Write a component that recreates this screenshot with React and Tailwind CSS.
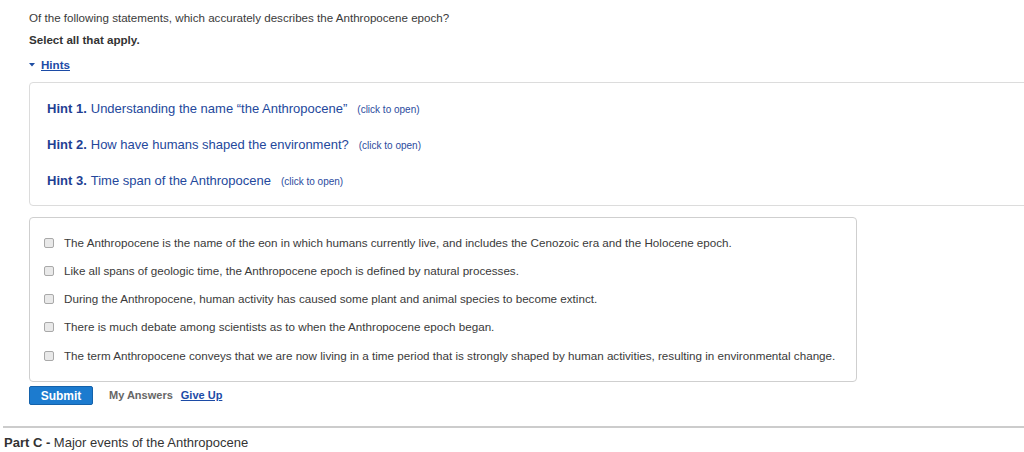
import React from "react";

const hints = [
  "Understanding the name “the Anthropocene”",
  "How have humans shaped the environment?",
  "Time span of the Anthropocene",
];

const answers = [
  "The Anthropocene is the name of the eon in which humans currently live, and includes the Cenozoic era and the Holocene epoch.",
  "Like all spans of geologic time, the Anthropocene epoch is defined by natural processes.",
  "During the Anthropocene, human activity has caused some plant and animal species to become extinct.",
  "There is much debate among scientists as to when the Anthropocene epoch began.",
  "The term Anthropocene conveys that we are now living in a time period that is strongly shaped by human activities, resulting in environmental change.",
];

export default function App() {
  return (
    <div
      className="w-[1024px] h-[452px] overflow-hidden bg-white text-[#333]"
      style={{ fontFamily: '"Liberation Sans", Arial, sans-serif' }}
    >
      <div className="pl-[29px]">
        <div className="pt-[11px] text-[11.6px] leading-[14px] text-[#3a3a3a]">
          Of the following statements, which accurately describes the Anthropocene epoch?
        </div>
        <div className="mt-[8px] text-[11.6px] leading-[14px] font-bold text-[#333]">
          Select all that apply.
        </div>
        <div className="mt-[11px] flex items-center h-[14px] text-[11.6px] leading-[14px]">
          <svg width="7" height="6" viewBox="0 0 7 6" className="mr-[5px]">
            <path d="M0 1 L6 1 L3 4.5 Z" fill="#1f4ea3" />
          </svg>
          <span className="font-bold text-[#1c4ba6] underline">Hints</span>
        </div>
        <div className="mt-[10px] w-[1010px] h-[124px] border border-[#dcdcdc] rounded-l-[4px] pl-[17px] pt-[18px] flex flex-col gap-[20px]">
          {hints.map((h, i) => (
            <div key={i} className="h-[16px] flex items-center whitespace-nowrap text-[#24489c]">
              <span className="text-[13px] font-bold text-[#1f3f93]">Hint {i + 1}.</span>
              <span className="text-[13px] ml-[4px]">{h}</span>
              <span className="text-[10px] ml-[10px] text-[#2b4b9e]">(click to open)</span>
            </div>
          ))}
        </div>
        <div className="mt-[11px] w-[828px] h-[165px] border border-[#cfcfcf] rounded-[4px] pl-[14px] pt-[18px] flex flex-col">
          {answers.map((a, i) => (
            <div
              key={i}
              className={`flex items-center h-[14px] ${i === 4 ? "mt-[15px]" : i > 0 ? "mt-[14px]" : ""}`}
            >
              <span className="w-[10px] h-[10px] rounded-[2px] border border-[#a9a9a9] bg-[#e9e9e9] mr-[10px] shrink-0" />
              <span className="text-[11.65px] leading-[14px] text-[#3a3a3a] whitespace-nowrap">{a}</span>
            </div>
          ))}
        </div>
        <div className="mt-[4px] flex items-center h-[19px]">
          <button className="w-[64px] h-[19px] bg-[#1c7bcf] border border-[#1462ab] rounded-[2px] text-white text-[12px] font-bold leading-none flex items-center justify-center">
            Submit
          </button>
          <span className="ml-[16px] text-[11px] font-bold text-[#666]">My Answers</span>
          <span className="ml-[8px] text-[11px] font-bold text-[#1c4ba6] underline">Give Up</span>
        </div>
      </div>
      <div className="mt-[21px] ml-[3px] h-[2px] bg-[#cccccc]" />
      <div className="mt-[7px] pl-[4px] text-[13px] leading-[16px] text-[#333]">
        <span className="font-bold">Part C - </span>Major events of the Anthropocene
      </div>
    </div>
  );
}
